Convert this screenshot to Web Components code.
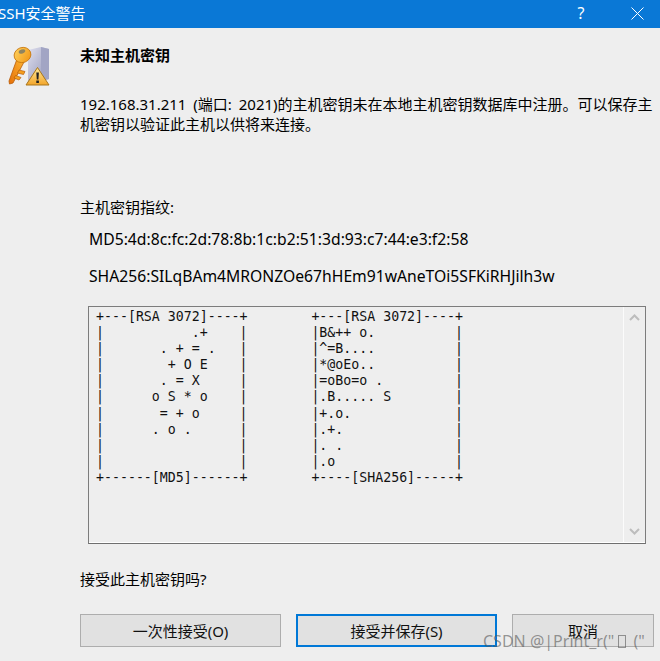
<!DOCTYPE html>
<html>
<head>
<meta charset="utf-8">
<style>
  html, body { margin: 0; padding: 0; background: #eeeeee; }
  body { width: 660px; height: 661px; overflow: hidden; font: 15px/20px "Noto Sans", "Noto Sans CJK SC", sans-serif; color: #000; }
</style>
</head>
<body>
<template id="title-bar">
  <style>
    :host { display: flex; align-items: center; box-sizing: border-box; height: 28px; padding-bottom: 2px; background: #0a78d6; color: #fff; font-size: 15px; overflow: hidden; }
    .name { margin-left: -2px; flex: 1; white-space: nowrap; }
    .help { width: 20px; margin-right: 40px; text-align: center; font-size: 16px; }
    svg { display: block; margin-right: 16px; }
  </style>
  <div class="name"><slot></slot></div>
  <div class="help">?</div>
  <svg width="13" height="13" viewBox="0 0 13 13"><path d="M.5.5l12 12M12.5.5l-12 12" stroke="#fff" stroke-width="1" fill="none"/></svg>
</template>

<template id="key-icon">
  <style>
    :host { display: block; width: 42px; height: 42px; }
    svg { display: block; }
  </style>
  <svg width="42" height="42" viewBox="0 0 42 42">
    <defs>
      <linearGradient id="srv" x1="0" y1="0" x2="1" y2="1"><stop offset="0" stop-color="#dfdfee"/><stop offset="1" stop-color="#8f93b6"/></linearGradient>
      <linearGradient id="gold" x1="0" y1="0" x2="1" y2="1"><stop offset="0" stop-color="#ffd662"/><stop offset="1" stop-color="#f1920f"/></linearGradient>
      <linearGradient id="shaft" x1="1" y1="0" x2="0" y2="1"><stop offset="0" stop-color="#fdb632"/><stop offset="1" stop-color="#e66f08"/></linearGradient>
      <linearGradient id="warn" x1="0" y1="0" x2="0" y2="1"><stop offset="0" stop-color="#ffe995"/><stop offset="1" stop-color="#f3a52a"/></linearGradient>
    </defs>
    <path d="M20 5l13-3 8 2v30l-21 4z" fill="url(#srv)"/>
    <path d="M33 2l8 2v30l-8 2z" fill="#a2a5c4"/>
    <path d="M9 14l7 3L5 38l-3.500 1-.5-3z" fill="url(#shaft)" stroke="#b85c08" stroke-width=".8"/>
    <path d="M11 25l6 1.500-1.500 3-6-1.500zM7.500 30.500l5.500 2-2 2.500-5-2z" fill="#f7a01c" stroke="#b85c08" stroke-width=".7"/>
    <ellipse cx="14.500" cy="10" rx="8.500" ry="7.500" transform="rotate(-20 14.500 10)" fill="url(#gold)" stroke="#c8760c" stroke-width=".8"/>
    <ellipse cx="14" cy="6.500" rx="3.400" ry="2" transform="rotate(-20 14 6.500)" fill="#8f8460"/>
    <path d="M29.500 22.500L41 40H18z" fill="url(#warn)" stroke="#a9761c" stroke-width="1" stroke-linejoin="round"/>
    <path d="M28.300 27.500h2.600l-.5 7h-1.600zM28.300 35.500h2.600v2.600h-2.600z" fill="#222"/>
  </svg>
</template>

<template id="art-box">
  <style>
    :host { display: flex; box-sizing: border-box; height: 238px; margin-left: 8px; width: 558px; border: 1px solid #7c7c7c; border-bottom-color: #6f6f6f; }
    pre { flex: 1; margin: 0; padding: 2px 0 0 7px; border-bottom: 1px solid #fff; font: 13.25px/16.1px "DejaVu Sans Mono", monospace; color: #111; }
    .bar { width: 21px; display: flex; flex-direction: column; justify-content: space-between; align-items: center; padding: 7px 0 7px; border-left: 1px solid #fbfbfb; border-bottom: 1px solid #fff; }
    svg { display: block; }
  </style>
  <pre><slot></slot></pre>
  <div class="bar">
    <svg width="11" height="7" viewBox="0 0 11 7"><path d="M1 6l4.500-4.500L10 6" stroke="#bdbdbd" stroke-width="2" fill="none"/></svg>
    <svg width="11" height="7" viewBox="0 0 11 7"><path d="M1 1l4.500 4.500L10 1" stroke="#bdbdbd" stroke-width="2" fill="none"/></svg>
  </div>
</template>

<template id="dialog-button">
  <style>
    :host { display: flex; align-items: center; justify-content: center; box-sizing: border-box; height: 33px; background: #e1e1e1; border: 1px solid #adadad; color: #111; }
    :host([primary]) { border: 2px solid #0078d7; }
  </style>
  <slot></slot>
</template>

<template id="ssh-dialog">
  <style>
    :host { display: block; height: 661px; position: relative; overflow: hidden; }
    .body { display: flex; }
    .side { width: 80px; box-sizing: border-box; padding: 17px 0 0 8px; flex: none; }
    .main { flex: 1; min-width: 0; padding-top: 17px; }
    h1 { margin: 0; font-size: 15px; line-height: 20px; font-weight: 700; }
    .intro { margin: 29px 0 0; width: 576px; word-spacing: 3px; }
    .label { margin-top: 63px; }
    .print { margin: 12px 0 0 9px; font-size: 15.7px; }
    .print + .print { margin-top: 17px; }
    .art { margin: 20px 0 0 0; }
    .ask { margin-top: 25px; }
    .buttons { display: flex; gap: 15px; margin-top: 25px; }
    .mark { position: absolute; left: 483px; top: 631px; font-size: 16px; line-height: 20px; color: rgba(90, 90, 90, .62); white-space: pre; }
    .tofu { display: inline-block; width: 6px; height: 11px; margin-right: 3px; border: 1px solid rgba(90, 90, 90, .62); vertical-align: -1px; }
  </style>
  <title-bar>SSH安全警告</title-bar>
  <div class="body">
    <div class="side"><key-icon></key-icon></div>
    <div class="main">
      <h1>未知主机密钥</h1>
      <p class="intro">192.168.31.211 (端口: 2021)的主机密钥未在本地主机密钥数据库中注册。可以保存主机密钥以验证此主机以供将来连接。</p>
      <div class="label">主机密钥指纹:</div>
      <div class="print">MD5:4d:8c:fc:2d:78:8b:1c:b2:51:3d:93:c7:44:e3:f2:58</div>
      <div class="print">SHA256:SILqBAm4MRONZOe67hHEm91wAneTOi5SFKiRHJilh3w</div>
      <div class="art"><art-box>+---[RSA 3072]----+        +---[RSA 3072]----+
|           .+    |        |B&amp;++ o.          |
|       . + = .   |        |^=B....          |
|        + O E    |        |*@oEo..          |
|       . = X     |        |=oBo=o .         |
|      o S * o    |        |.B..... S        |
|       = + o     |        |+.o.             |
|      . o .      |        |.+.              |
|                 |        |. .              |
|                 |        |.o               |
+------[MD5]------+        +----[SHA256]-----+</art-box></div>
      <div class="ask">接受此主机密钥吗?</div>
      <div class="buttons">
        <dialog-button style="width:201px">一次性接受(O)</dialog-button>
        <dialog-button style="width:201px" primary>接受并保存(S)</dialog-button>
        <dialog-button style="width:142px">取消</dialog-button>
      </div>
    </div>
  </div>
  <div class="mark">CSDN @|Print_r(" <span class="tofu"></span> ("</div>
</template>

<ssh-dialog></ssh-dialog>

<script>
  class TemplateElement extends HTMLElement {
    constructor () {
      super()
      let shadow = this.attachShadow({ mode: 'open' })
      shadow.appendChild(document.getElementById(this.localName).content.cloneNode(true))
    }
  }

  for (let name of ['title-bar', 'key-icon', 'art-box', 'dialog-button', 'ssh-dialog']) {
    window.customElements.define(name, class extends TemplateElement {})
  }
</script>
</body>
</html>
